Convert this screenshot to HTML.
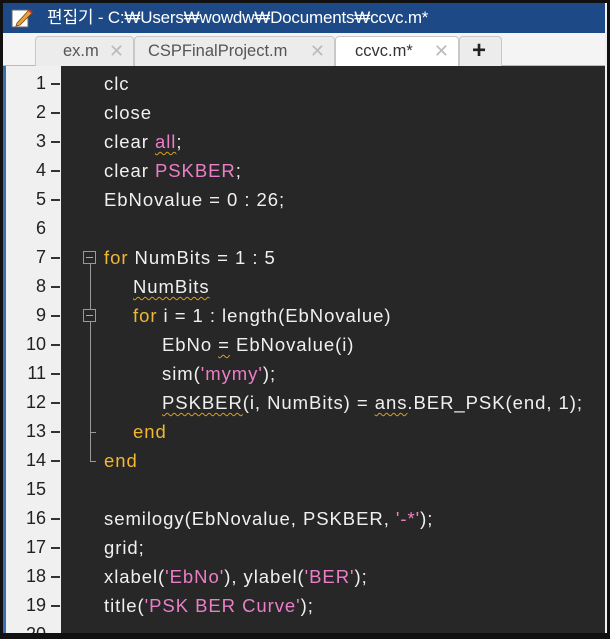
<!DOCTYPE html>
<html><head><meta charset="utf-8"><style>
*{margin:0;padding:0;box-sizing:border-box}
body{width:610px;height:639px;background:#fff;position:relative;overflow:hidden;font-family:"Liberation Sans","NanumGothic",sans-serif}
.frame{position:absolute;left:0;top:0;width:610px;height:639px;border:3px solid #111;border-bottom-width:6px;background:#f0f0f0}
.title{position:absolute;left:3px;top:3px;width:602px;height:30px;background:#1d4a86;color:#fff;font-size:17px;line-height:30px;padding-left:44px;font-family:"Liberation Sans","Noto Sans CJK KR",sans-serif;letter-spacing:-0.2px}
.tabs{position:absolute;left:3px;top:33px;width:602px;height:33px;background:#f4f4f4;border-bottom:1px solid #bbb}
.tab{position:absolute;top:3px;height:30px;border:1px solid #c8c8c8;border-bottom:none;border-radius:4px 4px 0 0;background:#ececec;color:#555;font-size:16.5px;line-height:28px;padding-left:18px}
.tab .x{position:absolute;right:9px;top:0;color:#bbb;font-size:18px}
.tab.act{background:#fff;color:#333}
.gut{position:absolute;left:3px;top:66px;width:58px;height:567px;background:#f0f0f0;border-left:3px solid #3a6fb0}
.code{position:absolute;left:61px;top:66px;width:544px;height:567px;background:#272727}
.ln{position:absolute;left:6px;width:40px;text-align:right;font-size:18px;color:#222;height:29px;line-height:29px}
.ln::after{content:"";position:absolute;right:-14px;top:14px;width:9px;height:1.5px;background:#333}
.ln.n::after{display:none}
.l{position:absolute;font-size:18.5px;color:#f0f0f0;height:29px;line-height:29px;white-space:pre;letter-spacing:0.95px}
.k{color:#f2b731}.s{color:#ea7fc8}
.w{text-decoration:underline wavy #d9a020;text-underline-offset:3px;text-decoration-thickness:1px}
.fold{position:absolute;width:13px;height:13px;border:1px solid #999;}
.fold::after{content:"";position:absolute;left:2px;top:5px;width:7px;height:1px;background:#aaa}
.vl{position:absolute;width:1px;background:#999}
</style></head><body>
<div class="frame"></div>
<div class="title">편집기 - C:₩Users₩wowdw₩Documents₩ccvc.m*</div>
<svg style="position:absolute;left:11px;top:7px" width="22" height="22" viewBox="0 0 22 22"><rect x="1" y="3" width="16" height="17" fill="#fff" stroke="#666"/><path d="M6 16 L18 3 L21 6 L9 18 L5 19 Z" fill="#e9a23b" stroke="#7a4a10" stroke-width="0.8"/><path d="M18 3 L21 6" stroke="#c33" stroke-width="2"/></svg>
<div class="tabs">
<div class="tab" style="left:32px;width:99px;padding-left:27px">ex.m<span class="x">✕</span></div>
<div class="tab" style="left:131px;width:201px;padding-left:13px">CSPFinalProject.m<span class="x">✕</span></div>
<div class="tab act" style="left:332px;width:124px;padding-left:19px">ccvc.m*<span class="x">✕</span></div>
<div class="tab" style="left:456px;width:43px;padding-left:12px;color:#222;font-size:24px;font-weight:bold">+</div>
</div>
<div class="gut"></div>
<div class="code"></div>
<div class="ln" style="top:69px">1</div>
<div class="ln" style="top:98px">2</div>
<div class="ln" style="top:127px">3</div>
<div class="ln" style="top:156px">4</div>
<div class="ln" style="top:185px">5</div>
<div class="ln n" style="top:214px">6</div>
<div class="ln" style="top:243px">7</div>
<div class="ln" style="top:272px">8</div>
<div class="ln" style="top:301px">9</div>
<div class="ln" style="top:330px">10</div>
<div class="ln" style="top:359px">11</div>
<div class="ln" style="top:388px">12</div>
<div class="ln" style="top:417px">13</div>
<div class="ln" style="top:446px">14</div>
<div class="ln n" style="top:475px">15</div>
<div class="ln" style="top:504px">16</div>
<div class="ln" style="top:533px">17</div>
<div class="ln" style="top:562px">18</div>
<div class="ln" style="top:591px">19</div>
<div class="ln n" style="top:620px;height:13px;overflow:hidden;line-height:29px">20</div>

<div class="fold" style="left:83px;top:251px"></div>
<div class="fold" style="left:83px;top:309px"></div>
<div class="vl" style="left:90px;top:264px;height:45px"></div>
<div class="vl" style="left:90px;top:322px;height:140px"></div>
<div class="vl" style="left:90px;top:432px;height:1px;width:6px"></div>
<div class="vl" style="left:90px;top:461px;height:1px;width:6px"></div>

<div class="l" style="left:104px;top:69px">clc</div>
<div class="l" style="left:104px;top:98px">close</div>
<div class="l" style="left:104px;top:127px">clear <span class="s w">all</span>;</div>
<div class="l" style="left:104px;top:156px">clear <span class="s">PSKBER</span>;</div>
<div class="l" style="left:104px;top:185px">EbNovalue = 0 : 26;</div>
<div class="l" style="left:104px;top:243px"><span class="k">for</span> NumBits = 1 : 5</div>
<div class="l" style="left:133px;top:272px"><span class="w">NumBits</span></div>
<div class="l" style="left:133px;top:301px"><span class="k">for</span> i = 1 : length(EbNovalue)</div>
<div class="l" style="left:162px;top:330px">EbNo <span class="w">=</span> EbNovalue(i)</div>
<div class="l" style="left:162px;top:359px">sim(<span class="s">'mymy'</span>);</div>
<div class="l" style="left:162px;top:388px"><span class="w">PSKBER</span>(i, NumBits) = <span class="w">ans</span>.BER_PSK(end, 1);</div>
<div class="l" style="left:133px;top:417px"><span class="k">end</span></div>
<div class="l" style="left:104px;top:446px"><span class="k">end</span></div>
<div class="l" style="left:104px;top:504px">semilogy(EbNovalue, PSKBER, <span class="s">'-*'</span>);</div>
<div class="l" style="left:104px;top:533px">grid;</div>
<div class="l" style="left:104px;top:562px">xlabel(<span class="s">'EbNo'</span>), ylabel(<span class="s">'BER'</span>);</div>
<div class="l" style="left:104px;top:591px">title(<span class="s">'PSK BER Curve'</span>);</div>
</body></html>
